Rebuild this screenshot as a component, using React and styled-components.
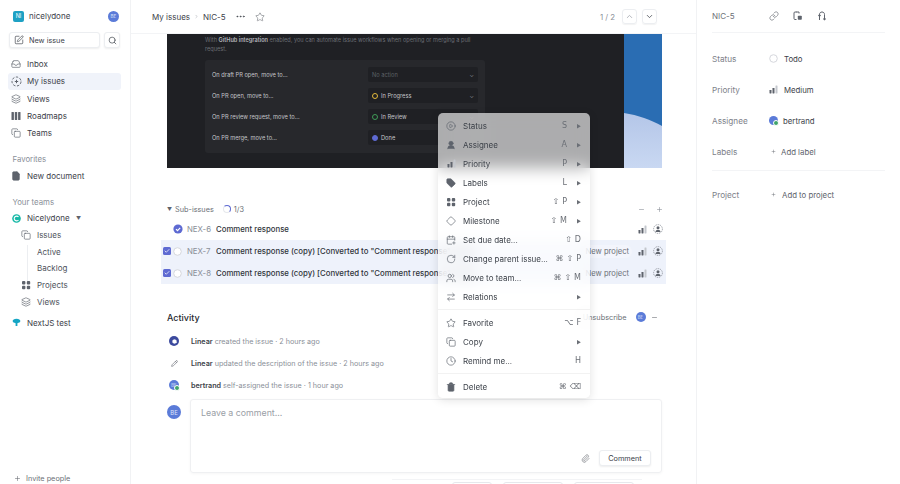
import React from 'react'
import styled, { createGlobalStyle } from 'styled-components'
import {
  SquarePen, Search, Inbox, Layers, Copy, File, Star, Ellipsis, ChevronUp, ChevronDown, Link, Plus, Minus,
  CirclePlay, UserRound, Tag, Diamond, CalendarPlus, RotateCw, Users, ArrowRightLeft,
  Clock, Trash2, Paperclip, Pencil, Check, ChevronRight, Hexagon,
} from 'lucide-react'

const GlobalStyle = createGlobalStyle`
  html, body { margin: 0; height: 484px; overflow: hidden; background: #fff; }
  body { font-family: Inter, "Noto Sans", sans-serif; font-size: 8px; color: #3c4149; }
  * { box-sizing: border-box; }
`

// small drawn icons lucide has no match for
const Bars = ({ color = '#5e636c' }) => (
  <svg width="9" height="9" viewBox="0 0 9 9">
    <rect x="0.5" y="5" width="2" height="3.5" rx=".4" fill={color} />
    <rect x="3.5" y="3" width="2" height="5.5" rx=".4" fill={color} />
    <rect x="6.5" y="0.5" width="2" height="8" rx=".4" fill="#c4c7cd" />
  </svg>
)

const GridDots = () => (
  <svg width="10" height="10" viewBox="0 0 10 10" fill="#5e636c">
    <rect x="1" y="1" width="3.4" height="3.4" rx="1" />
    <rect x="5.8" y="1" width="3.4" height="3.4" rx="1" />
    <rect x="1" y="5.8" width="3.4" height="3.4" rx="1" />
    <rect x="5.8" y="5.8" width="3.4" height="3.4" rx="1" />
  </svg>
)

const RoadmapIcon = () => (
  <svg width="10" height="10" viewBox="0 0 10 10" fill="#5e636c">
    <rect x="0.5" y="1" width="2.4" height="8" rx=".5" />
    <rect x="3.8" y="1" width="2.4" height="8" rx=".5" />
    <rect x="7.1" y="1" width="2.4" height="8" rx=".5" />
  </svg>
)

const FocusIcon = () => (
  <svg width="11" height="11" viewBox="0 0 11 11" fill="none" stroke="#5e636c" strokeWidth="1">
    <circle cx="5.5" cy="5.5" r="4.5" strokeDasharray="2.4 1.6" />
    <path d="M5.5 3.8v3.4M3.8 5.5h3.4" />
  </svg>
)

const CopyLock = () => (
  <svg width="10" height="10" viewBox="0 0 10 10" fill="none" stroke="#5e636c" strokeWidth="1">
    <path d="M4 1H2a1 1 0 0 0-1 1v5.5a1 1 0 0 0 1 1h1.500" />
    <path d="M3.5 1H6v1.500" />
    <rect x="4.8" y="4.8" width="4" height="4" rx=".8" fill="#5e636c" stroke="none" />
  </svg>
)

const ArchBranch = () => (
  <svg width="10" height="10" viewBox="0 0 10 10" fill="none" stroke="#5e636c" strokeWidth="1">
    <path d="M2.5 9V3.5C2.5 2 3.5 1 5 1s2.500 1 2.500 2.500V9" />
    <circle cx="2.5" cy="4.5" r=".8" fill="#5e636c" />
    <circle cx="7.5" cy="8" r=".8" fill="#5e636c" />
  </svg>
)

const EmptyStatus = () => (
  <svg width="9" height="9" viewBox="0 0 9 9"><circle cx="4.5" cy="4.5" r="3.8" fill="#fff" stroke="#d5d7dc" strokeWidth="1" /></svg>
)

const DoneStatus = () => (
  <svg width="10" height="10" viewBox="0 0 10 10">
    <circle cx="5" cy="5" r="4.6" fill="#5e6ad2" />
    <path d="M3 5.1l1.5 1.5L7.2 3.8" fill="none" stroke="#fff" strokeWidth="1.2" />
  </svg>
)

const PersonCircle = () => (
  <svg width="10" height="10" viewBox="0 0 10 10" fill="none">
    <circle cx="5" cy="5" r="4.4" stroke="#8a8f98" strokeWidth=".8" strokeDasharray="1.4 .8" />
    <circle cx="5" cy="3.8" r="1.5" fill="#5e636c" />
    <path d="M2.4 8c.3-1.6 1.3-2.3 2.6-2.3S7.3 6.4 7.6 8z" fill="#5e636c" />
  </svg>
)

const TeamLogo = ({ color }) => (
  <svg width="9" height="9" viewBox="0 0 9 9">
    <circle cx="4.5" cy="4.5" r="4.3" fill={color} />
    <path d="M6.5 3a2.4 2.4 0 1 0 0 3" fill="none" stroke="#fff" strokeWidth="1.1" />
  </svg>
)

const TreeLogo = () => (
  <svg width="9" height="9" viewBox="0 0 10 10" fill="#14a5c4">
    <path d="M5 .8c2.6 0 4.3 1.1 4.3 2.6 0 1.3-1.5 2.2-3.3 2.3v3.2H4V5.700C2.200 5.600.7 4.700.7 3.400.7 1.900 2.400.8 5 .8z" />
  </svg>
)

const SidebarIcon = styled.span`
  width: 11px;
  height: 11px;
  display: inline-flex;
  align-items: center;
  justify-content: center;
  flex: none;
  color: #5e636c;
`

const Page = styled.div`
  position: relative;
  display: flex;
  width: 900px;
  height: 484px;
  overflow: hidden;
`

const Sidebar = styled.aside`
  width: 131px;
  flex: none;
  display: flex;
  flex-direction: column;
  padding: 9px 9px 0 8px;
  border-right: 1px solid #f1f2f4;
`

const Workspace = styled.div`
  display: flex;
  align-items: center;
  height: 14px;
  padding: 0 2px 0 5px;
  color: #3c4149;
`

const WorkspaceLogo = styled.span`
  width: 11px;
  height: 11px;
  border-radius: 2px;
  background: #1ea1c4;
  color: #fff;
  font-size: 5.5px;
  display: flex;
  align-items: center;
  justify-content: center;
  margin-right: 5px;
`

const Avatar = styled.span`
  width: ${p => p.$size || 11}px;
  height: ${p => p.$size || 11}px;
  flex: none;
  border-radius: 50%;
  background: #5b7bd8;
  color: #dfe6fb;
  font-size: ${p => (p.$size || 11) * 0.42}px;
  display: flex;
  align-items: center;
  justify-content: center;
  margin-left: ${p => (p.$end ? 'auto' : '0')};
`

const OnlineAvatar = styled(Avatar)`
  position: relative;
  &::after {
    content: '';
    position: absolute;
    right: -1px;
    bottom: -1px;
    width: 4px;
    height: 4px;
    border-radius: 50%;
    background: #3fa46a;
    border: .5px solid #fff;
  }
`

const SubscriberAvatar = styled(Avatar)`
  margin-left: 4px;
`

const ActionRow = styled.div`
  display: flex;
  gap: 4px;
  margin: 9px 0 7.5px 1px;
`

const SoftButton = styled.button`
  height: 16px;
  width: ${p => p.$width}px;
  border: 1px solid #eceef1;
  border-radius: 3px;
  background: #fff;
  box-shadow: 0 1px 2px rgba(0, 0, 0, .07);
  display: flex;
  align-items: center;
  justify-content: ${p => (p.$center ? 'center' : 'flex-start')};
  gap: 5px;
  padding: ${p => (p.$center ? '0' : '0 4px')};
  font: inherit;
  font-size: 7.3px;
  color: #3c4149;
`

const NavList = styled.nav`
  display: flex;
  flex-direction: column;
`

const NavItem = styled.div`
  height: 17.25px;
  display: flex;
  align-items: center;
  gap: 5.5px;
  padding-left: 2.5px;
  border-radius: 3px;
  background: ${p => (p.$active ? '#f0f3fa' : 'transparent')};
  color: #3c4149;
`

const SectionLabel = styled.div`
  font-size: 7.8px;
  color: #8a8f98;
  margin: ${p => p.$top}px 0 2px 4.5px;
  line-height: 11px;
`

const TeamRow = styled.div`
  height: 17px;
  display: flex;
  align-items: center;
  gap: 6.5px;
  padding-left: 3.5px;
  margin-top: ${p => p.$top || 0}px;
  color: #3c4149;
`

const Caret = styled.span`
  font-size: 5px;
  color: #5e636c;
`

const TeamNav = styled.div`
  position: relative;
  display: flex;
  flex-direction: column;
  padding-left: 12.5px;
`

const TeamItem = styled.div`
  height: 16.8px;
  display: flex;
  align-items: center;
  gap: 5.5px;
  padding-left: ${p => (p.$nested ? '16.5px' : '0')};
  color: #4e535b;
`

const TreeLine = styled.span`
  position: absolute;
  left: 18.5px;
  top: 18px;
  width: 1px;
  height: 36px;
  background: #eceef1;
`

const InviteRow = styled.div`
  margin-top: auto;
  height: 16px;
  margin-bottom: -2px;
  display: flex;
  align-items: center;
  gap: 5px;
  padding-left: 6px;
  font-size: 7.3px;
  color: #6b6f76;
`

const Main = styled.main`
  flex: 1;
  min-width: 0;
  display: flex;
  flex-direction: column;
  border-right: 1px solid #f1f2f4;
`

const TopBar = styled.header`
  height: 34px;
  flex: none;
  display: flex;
  align-items: center;
  padding: 0 39px 0 21px;
  border-bottom: 1px solid #f3f4f6;
  gap: 4px;
`

const Crumb = styled.span`
  color: #3c4149;
`

const MoreIcon = styled(Ellipsis)`
  margin-left: 5px;
  color: #3c4149;
`

const FavIcon = styled(Star)`
  margin-left: 5px;
  color: #6b6f76;
`

const Pager = styled.span`
  margin-left: auto;
  margin-right: 3px;
  color: #8a8f98;
  font-size: 7.8px;
`

const PageButton = styled.span`
  width: 15px;
  height: 15px;
  border: 1px solid #eceef1;
  border-radius: 3px;
  box-shadow: 0 1px 1px rgba(0, 0, 0, .05);
  display: flex;
  align-items: center;
  justify-content: center;
  color: ${p => (p.$dim ? '#9ca0a8' : '#3c4149')};
  margin-left: ${p => p.$gap || 0}px;
`

const Content = styled.div`
  padding: 0 34px 0 36px;
`

const Shot = styled.div`
  height: 134px;
  display: flex;
`

const ShotDark = styled.div`
  flex: 1;
  background: #1f2024;
  padding: 2px 0 0 38px;
  color: #6c6f76;
  font-size: 5.6px;
  line-height: 9px;
`

const ShotStrong = styled.b`
  color: #b5b7bc;
  font-weight: 600;
`

const ShotIntro = styled.div`
  width: 280px;
`

const ShotPanel = styled.div`
  width: 280px;
  height: 93px;
  margin-top: 6px;
  padding: 7px 7px;
  border-radius: 3px;
  background: #27282c;
  display: grid;
  grid-auto-rows: 15px;
  row-gap: 6px;
`

const ShotRow = styled.div`
  display: flex;
  align-items: center;
  justify-content: space-between;
  font-size: 5.7px;
  color: #c4c5c9;
`

const ShotSelect = styled.div`
  width: 110px;
  height: 15px;
  background: #1f2024;
  border-radius: 2px;
  display: flex;
  align-items: center;
  gap: 3px;
  padding: 0 4px;
  color: ${p => (p.$muted ? '#5d6066' : '#c4c5c9')};
`

const ShotDot = styled.span`
  width: 6px;
  height: 6px;
  border-radius: 50%;
  border: 1.5px solid ${p => p.$color};
  background: ${p => (p.$fill ? p.$color : 'transparent')};
`

const ShotCaret = styled.span`
  margin-left: auto;
  color: #9a9ca1;
`

const ShotSide = styled.svg`
  width: 38px;
  height: 134px;
  flex: none;
  display: block;
`

const SubHeader = styled.div`
  height: 20px;
  margin-top: 30px;
  padding-top: 2px;
  display: flex;
  align-items: center;
  gap: 3px;
  font-size: 7.3px;
  color: #6b6f76;
`

const Progress = styled.span`
  width: 8px;
  height: 8px;
  margin: 0 0 0 6px;
  border-radius: 50%;
  border: 1px solid #e6e8ec;
  border-top-color: #5e6ad2;
  border-right-color: #5e6ad2;
`

const SubTools = styled.span`
  margin: 0 -1px 0 auto;
  display: flex;
  gap: 11px;
  color: #8a8f98;
`

const IssueList = styled.div`
  margin: 0 -4px 0 -6px;
`

const IssueRow = styled.div`
  height: 22px;
  display: flex;
  align-items: center;
  padding: 0 3px 0 1px;
  background: ${p => (p.$selected ? '#eef2fb' : 'transparent')};
`

const CheckSlot = styled.span`
  width: 11px;
  height: 8px;
  margin-left: 1px;
  display: flex;
  flex: none;
`

const CheckBox = styled.span`
  width: 8px;
  height: 8px;
  border-radius: 1.5px;
  background: #5e6ad2;
  color: #fff;
  display: flex;
  align-items: center;
  justify-content: center;
`

const StatusSlot = styled.span`
  width: 7px;
  flex: none;
  display: flex;
  justify-content: center;
  & > svg { flex: none; }
`

const IssueId = styled.span`
  width: 29px;
  flex: none;
  margin-left: 6px;
  font-size: 7.8px;
  color: #8a8f98;
`

const IssueTitle = styled.span`
  flex: 1;
  min-width: 0;
  font-size: 7.8px;
  font-weight: 500;
  color: #30343a;
  white-space: nowrap;
  overflow: hidden;
`

const ProjectChip = styled.span`
  flex: none;
  color: #6b6f76;
  font-size: 7.6px;
  margin: 0 6px 0 6px;
  padding: 2px 3px;
  border-radius: 7px;
  background: ${p => (p.$pill ? '#f3f5fc' : 'transparent')};
`

const IssueMeta = styled.span`
  flex: none;
  display: flex;
  align-items: center;
  gap: 6px;
`

const ActivityHead = styled.div`
  height: 20px;
  margin: 23px 0 3px;
  display: flex;
  align-items: center;
`

const ActivityTitle = styled.h3`
  margin: 0;
  font-size: 9px;
  font-weight: 500;
  color: #282a30;
`

const Subscribe = styled.span`
  margin-left: auto;
  display: flex;
  align-items: center;
  gap: 5px;
  font-size: 7.3px;
  color: #6b6f76;
  padding-right: 4.5px;
`

const ActivityRow = styled.div`
  height: 22px;
  display: flex;
  align-items: center;
  font-size: 7.2px;
  color: #8a8f98;
  gap: 2px;
`

const ActivityIcon = styled.span`
  width: 14px;
  margin-right: 8px;
  flex: none;
  display: flex;
  justify-content: center;
`

const LinearDot = styled.span`
  width: 10px;
  height: 10px;
  border-radius: 50%;
  background: #3c4a9e;
  display: flex;
  align-items: center;
  justify-content: center;
  color: #fff;
`

const Actor = styled.b`
  color: #3c4149;
  font-weight: 600;
`

const CommentArea = styled.div`
  margin-top: 3px;
  display: flex;
  align-items: flex-start;
  gap: 9px;
`

const CommentAvatarWrap = styled.div`
  padding-top: 6px;
`

const CommentBox = styled.div`
  flex: 1;
  height: 74px;
  border: 1px solid #eff0f2;
  border-radius: 3px;
  box-shadow: 0 1px 3px rgba(0, 0, 0, .04);
  display: flex;
  flex-direction: column;
  padding: 7px 10px 6px 10px;
`

const Placeholder = styled.div`
  font-size: 8.8px;
  color: #9a9ea6;
`

const CommentActions = styled.div`
  margin-top: auto;
  display: flex;
  align-items: center;
  justify-content: flex-end;
  gap: 9px;
  color: #6b6f76;
`

const FooterBar = styled.div`
  width: 250px;
  margin: 6px 0 0 225px;
  border-top: 1px solid #f3f4f6;
  display: flex;
  gap: 11px;
  padding: 2px 0 0 60px;
`

const FooterChip = styled.span`
  width: ${p => p.$width}px;
  height: 16px;
  border: 1px solid #e6e8ec;
  border-radius: 3px;
`

const Details = styled.aside`
  width: 203px;
  flex: none;
  padding: 0 15px;
`

const DetailsHead = styled.div`
  height: 33px;
  display: flex;
  align-items: center;
  border-bottom: 1px solid #f3f4f6;
  color: #6b6f76;
`

const HeadIcons = styled.span`
  display: flex;
  gap: 14px;
  margin-left: 34px;
  color: #5e636c;
`

const Prop = styled.div`
  height: 31px;
  display: flex;
  align-items: center;
  color: #6b6f76;
`

const PropList = styled.div`
  padding: ${p => (p.$open ? '8px 0 3px' : '10px 0 3px')};
  border-bottom: ${p => (p.$open ? 'none' : '1px solid #f3f4f6')};
`

const PropName = styled.span`
  width: 57px;
  font-size: 8.2px;
  color: #7d8189;
`

const PropValue = styled.span`
  display: flex;
  align-items: center;
  font-size: 7.8px;
  gap: ${p => p.$gap}px;
  color: ${p => p.$color || '#3c4149'};
`

const AddIcon = styled(Plus)`
  margin-left: 2px;
`

const Menu = styled.div`
  position: absolute;
  left: 438px;
  top: 113px;
  width: 152px;
  height: 285px;
  padding: 3px 0;
  border-radius: 5px;
  background: rgba(255, 255, 255, .63);
  backdrop-filter: blur(8px);
  box-shadow: 0 2px 10px rgba(0, 0, 0, .12);
  color: #3c4149;
`

const MenuItem = styled.div`
  height: 19px;
  display: flex;
  align-items: center;
  padding: 0 9px 0 8px;
  white-space: nowrap;
`

const MenuIcon = styled.span`
  width: 10px;
  margin-right: 7px;
  display: flex;
  justify-content: center;
  color: #5e636c;
`

const Shortcut = styled.span`
  margin-left: auto;
  display: flex;
  gap: 3px;
  font-family: "DejaVu Sans", Inter, sans-serif;
  font-size: 8px;
  color: #6b6f76;
`

const Arrow = styled.span`
  width: 14px;
  text-align: right;
  font-size: 5px;
  color: #6b6f76;
  margin-left: ${p => (p.$alone ? 'auto' : '0')};
`

const MenuLine = styled.div`
  height: 1px;
  background: rgba(0, 0, 0, .05);
  margin: ${p => p.$top}px 0 ${p => p.$bottom}px;
`

const ic = { size: 10, strokeWidth: 1.6 }

const menuTop = [
  { icon: <CirclePlay {...ic} />, label: 'Status', keys: ['S'], more: true },
  { icon: <UserRound {...ic} fill="currentColor" />, label: 'Assignee', keys: ['A'], more: true },
  { icon: <Bars />, label: 'Priority', keys: ['P'], more: true },
  { icon: <Tag {...ic} fill="currentColor" />, label: 'Labels', keys: ['L'], more: true },
  { icon: <GridDots />, label: 'Project', keys: ['⇧', 'P'], more: true },
  { icon: <Diamond {...ic} />, label: 'Milestone', keys: ['⇧', 'M'], more: true },
  { icon: <CalendarPlus {...ic} />, label: 'Set due date...', keys: ['⇧', 'D'] },
  { icon: <RotateCw {...ic} />, label: 'Change parent issue...', keys: ['⌘', '⇧', 'P'] },
  { icon: <Users {...ic} />, label: 'Move to team...', keys: ['⌘', '⇧', 'M'] },
  { icon: <ArrowRightLeft {...ic} />, label: 'Relations', more: true },
]

const menuMid = [
  { icon: <Star {...ic} />, label: 'Favorite', keys: ['⌥', 'F'] },
  { icon: <Copy {...ic} />, label: 'Copy', more: true },
  { icon: <Clock {...ic} />, label: 'Remind me...', keys: ['H'] },
]

const MenuEntry = ({ item }) => (
  <MenuItem>
    <MenuIcon>{item.icon}</MenuIcon>
    {item.label}
    {item.keys && <Shortcut>{item.keys.map(k => <span key={k}>{k}</span>)}</Shortcut>}
    {item.more && <Arrow $alone={!item.keys}>▶</Arrow>}
  </MenuItem>
)

const LONG_TITLE = 'Comment response (copy) [Converted to "Comment response" issue]'

const issues = [
  { id: 'NEX-6', title: 'Comment response', done: true },
  { id: 'NEX-7', title: LONG_TITLE, selected: true, pill: true },
  { id: 'NEX-8', title: LONG_TITLE, selected: true },
]

const navItems = [
  { icon: <Inbox {...ic} />, label: 'Inbox' },
  { icon: <FocusIcon />, label: 'My issues', active: true },
  { icon: <Layers {...ic} />, label: 'Views' },
  { icon: <RoadmapIcon />, label: 'Roadmaps' },
  { icon: <Copy {...ic} />, label: 'Teams' },
]

const shotRows = [
  { label: 'On draft PR open, move to...', value: 'No action', muted: true },
  { label: 'On PR open, move to...', value: 'In Progress', color: '#e2b93b' },
  { label: 'On PR review request, move to...', value: 'In Review', color: '#3f9b57' },
  { label: 'On PR merge, move to...', value: 'Done', color: '#5e6ad2', fill: true },
]

export default function App() {
  return (
    <Page>
      <GlobalStyle />
      <Sidebar>
        <Workspace>
          <WorkspaceLogo>NI</WorkspaceLogo>
          nicelydone
          <Avatar $end>BE</Avatar>
        </Workspace>
        <ActionRow>
          <SoftButton $width={91}><SquarePen size={10} strokeWidth={1.6} />New issue</SoftButton>
          <SoftButton $width={16} $center><Search size={9} strokeWidth={1.8} /></SoftButton>
        </ActionRow>
        <NavList>
          {navItems.map(n => (
            <NavItem key={n.label} $active={n.active}>
              <SidebarIcon>{n.icon}</SidebarIcon>
              {n.label}
            </NavItem>
          ))}
        </NavList>
        <SectionLabel $top={12.5}>Favorites</SectionLabel>
        <NavItem>
          <SidebarIcon><File {...ic} fill="currentColor" /></SidebarIcon>
          New document
        </NavItem>
        <SectionLabel $top={12}>Your teams</SectionLabel>
        <TeamRow>
          <TeamLogo color="#16b8a6" />
          Nicelydone
          <Caret>▼</Caret>
        </TeamRow>
        <TeamNav>
          <TreeLine />
          <TeamItem><SidebarIcon><Copy {...ic} /></SidebarIcon>Issues</TeamItem>
          <TeamItem $nested>Active</TeamItem>
          <TeamItem $nested>Backlog</TeamItem>
          <TeamItem><SidebarIcon><GridDots /></SidebarIcon>Projects</TeamItem>
          <TeamItem><SidebarIcon><Layers {...ic} /></SidebarIcon>Views</TeamItem>
        </TeamNav>
        <TeamRow $top={4}>
          <TreeLogo />
          NextJS test
        </TeamRow>
        <InviteRow><Plus size={7} strokeWidth={2} />Invite people</InviteRow>
      </Sidebar>

      <Main>
        <TopBar>
          <Crumb>My issues</Crumb>
          <ChevronRight size={5} color="#8a8f98" />
          <Crumb>NIC-5</Crumb>
          <MoreIcon size={11} strokeWidth={1.6} />
          <FavIcon size={10} strokeWidth={1.4} />
          <Pager>1 / 2</Pager>
          <PageButton $dim><ChevronUp size={9} /></PageButton>
          <PageButton $gap={1}><ChevronDown size={9} /></PageButton>
        </TopBar>
        <Content>
          <Shot>
            <ShotDark>
              <ShotIntro>
                With <ShotStrong>GitHub integration</ShotStrong> enabled, you can automate issue workflows when opening or merging a pull request.
              </ShotIntro>
              <ShotPanel>
                {shotRows.map(r => (
                  <ShotRow key={r.label}>
                    {r.label}
                    <ShotSelect $muted={r.muted}>
                      {r.color && <ShotDot $color={r.color} $fill={r.fill} />}
                      {r.value}
                      <ShotCaret>⌄</ShotCaret>
                    </ShotSelect>
                  </ShotRow>
                ))}
              </ShotPanel>
            </ShotDark>
            <ShotSide viewBox="0 0 38 134">
              <defs>
                <linearGradient id="shotLight" x1="0" y1="0" x2="0" y2="1">
                  <stop offset="0" stopColor="#b4c6e8" />
                  <stop offset="1" stopColor="#c9d8f2" />
                </linearGradient>
              </defs>
              <rect width="38" height="134" fill="#2a6db3" />
              <path d="M0 79C14 81 27 86 38 92V134H0Z" fill="url(#shotLight)" />
            </ShotSide>
          </Shot>

          <SubHeader>
            <Caret>▼</Caret>
            Sub-issues
            <Progress />
            1/3
            <SubTools><Minus size={7} /><Plus size={7} /></SubTools>
          </SubHeader>
          <IssueList>
            {issues.map(i => (
              <IssueRow key={i.id} $selected={i.selected}>
                <CheckSlot>{i.selected && <CheckBox><Check size={6} strokeWidth={3} /></CheckBox>}</CheckSlot>
                <StatusSlot>{i.done ? <DoneStatus /> : <EmptyStatus />}</StatusSlot>
                <IssueId>{i.id}</IssueId>
                <IssueTitle>{i.title}</IssueTitle>
                {i.selected && <ProjectChip $pill={i.pill}>New project</ProjectChip>}
                <IssueMeta><Bars /><PersonCircle /></IssueMeta>
              </IssueRow>
            ))}
          </IssueList>

          <ActivityHead>
            <ActivityTitle>Activity</ActivityTitle>
            <Subscribe>Unsubscribe<SubscriberAvatar $size={10}>BE</SubscriberAvatar><Minus size={7} /></Subscribe>
          </ActivityHead>
          <ActivityRow>
            <ActivityIcon><LinearDot><Hexagon size={5} fill="currentColor" /></LinearDot></ActivityIcon>
            <Actor>Linear</Actor> created the issue · 2 hours ago
          </ActivityRow>
          <ActivityRow>
            <ActivityIcon><Pencil size={7} color="#5e636c" /></ActivityIcon>
            <Actor>Linear</Actor> updated the description of the issue · 2 hours ago
          </ActivityRow>
          <ActivityRow>
            <ActivityIcon><OnlineAvatar $size={10}>BE</OnlineAvatar></ActivityIcon>
            <Actor>bertrand</Actor> self-assigned the issue · 1 hour ago
          </ActivityRow>

          <CommentArea>
            <CommentAvatarWrap><Avatar $size={14}>BE</Avatar></CommentAvatarWrap>
            <CommentBox>
              <Placeholder>Leave a comment...</Placeholder>
              <CommentActions>
                <Paperclip size={9} strokeWidth={1.6} />
                <SoftButton $width={52} $center>Comment</SoftButton>
              </CommentActions>
            </CommentBox>
          </CommentArea>
          <FooterBar>
            <FooterChip $width={40} />
            <FooterChip $width={60} />
            <FooterChip $width={60} />
          </FooterBar>
        </Content>
      </Main>

      <Details>
        <DetailsHead>
          NIC-5
          <HeadIcons>
            <Link size={10} strokeWidth={1.5} />
            <CopyLock />
            <ArchBranch />
          </HeadIcons>
        </DetailsHead>
        <PropList>
          <Prop><PropName>Status</PropName><PropValue $gap={6}><EmptyStatus />Todo</PropValue></Prop>
          <Prop><PropName>Priority</PropName><PropValue $gap={6}><Bars />Medium</PropValue></Prop>
          <Prop><PropName>Assignee</PropName><PropValue $gap={5}><OnlineAvatar $size={9} />bertrand</PropValue></Prop>
          <Prop><PropName>Labels</PropName><PropValue $gap={5} $color="#5e636c"><AddIcon size={5} strokeWidth={2} />Add label</PropValue></Prop>
        </PropList>
        <PropList $open>
          <Prop><PropName>Project</PropName><PropValue $gap={6} $color="#5e636c"><AddIcon size={5} strokeWidth={2} />Add to project</PropValue></Prop>
        </PropList>
      </Details>

      <Menu>
        {menuTop.map(m => <MenuEntry key={m.label} item={m} />)}
        <MenuLine $top={3} $bottom={3} />
        {menuMid.map(m => <MenuEntry key={m.label} item={m} />)}
        <MenuLine $top={3} $bottom={3} />
        <MenuEntry item={{ icon: <Trash2 {...ic} fill="currentColor" />, label: 'Delete', keys: ['⌘', '⌫'] }} />
      </Menu>
    </Page>
  )
}
